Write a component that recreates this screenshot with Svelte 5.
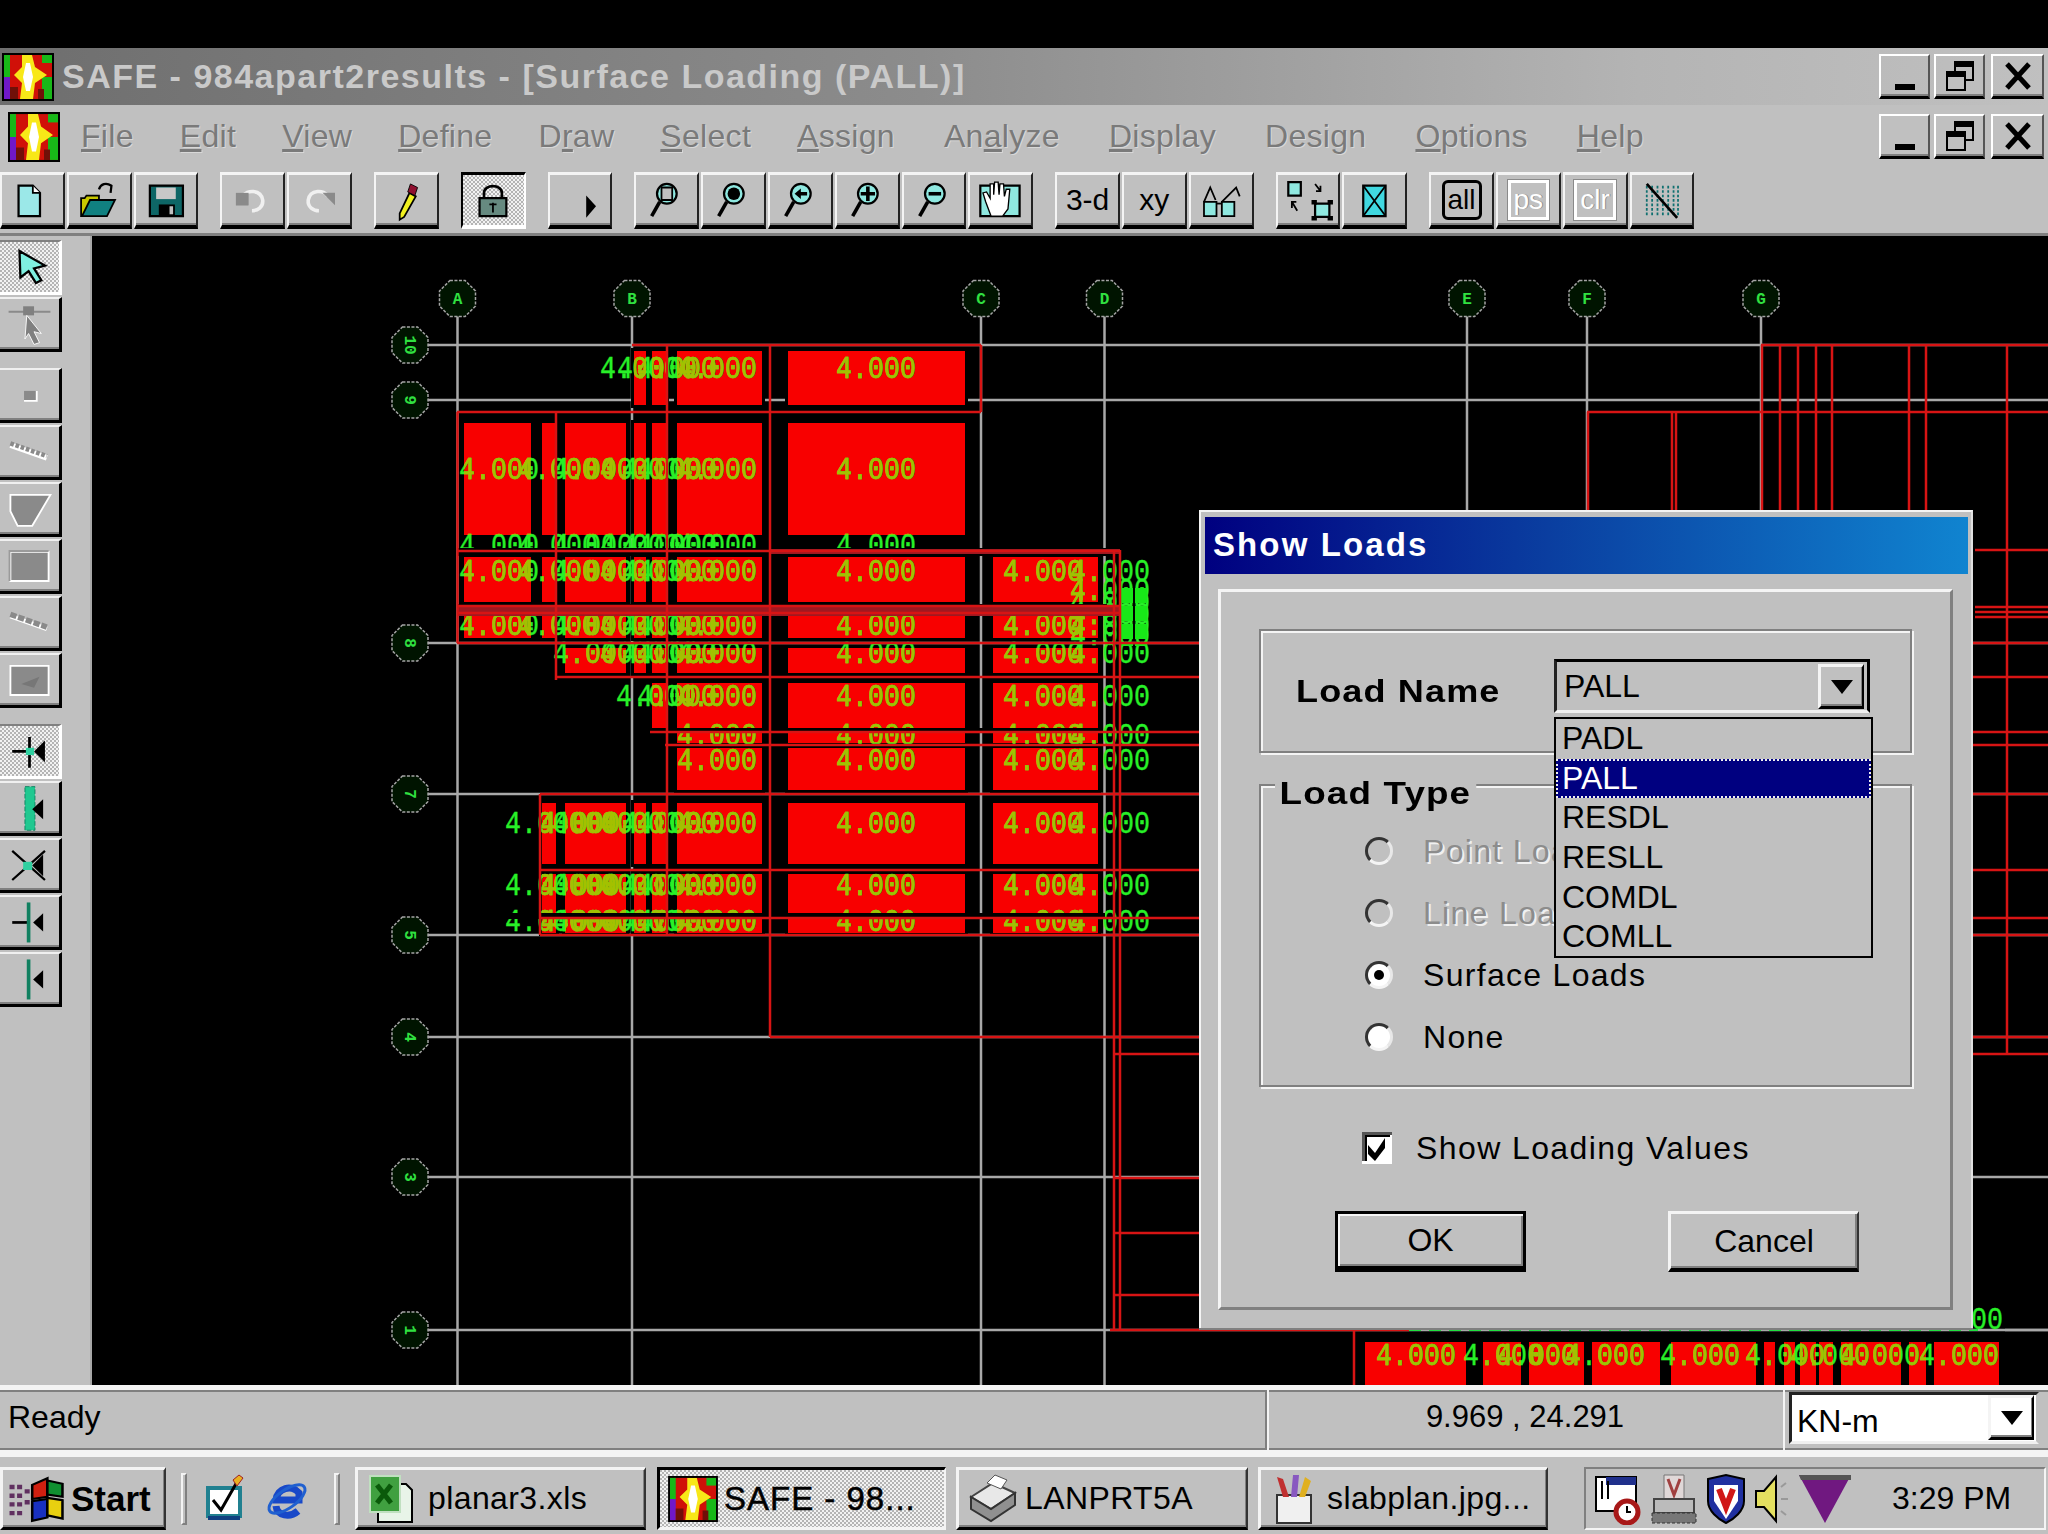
<script>
  // SAFE window with the Show Loads dialog open on top of the plan view.
  const menus = ["File", "Edit", "View", "Define", "Draw", "Select", "Assign", "Analyze", "Display", "Design", "Options", "Help"];
  const accessKey = { Draw: 1, Analyze: 2, Design: 4 };

  const mag = (inner) => `<circle cx="33" cy="21" r="11" fill="#8fe8e0" stroke="#000" stroke-width="2.5"/><path d="M25 30L16 46" stroke="#000" stroke-width="4"/>${inner}`;

  const ICONS = {
    new: `<path d="M17 12h16l8 8v26H17z" fill="#9be8e8" stroke="#000" stroke-width="2.5"/><path d="M33 12v8h8" fill="#fff" stroke="#000" stroke-width="2"/>`,
    open: `<path d="M12 46V26h4l2-3h14v5H24L14 46z" fill="#c8c800" stroke="#000" stroke-width="2"/><path d="M13 46l9-18h28l-9 18z" fill="#108080" stroke="#000" stroke-width="2"/><path d="M32 16c2-6 8-8 14-4l-1 8" fill="none" stroke="#000" stroke-width="2.5"/>`,
    save: `<path d="M14 12h37v34H14z" fill="#0e6666" stroke="#000" stroke-width="2.5"/><path d="M21 14h22v13H21z" fill="#c8c8c8"/><path d="M24 33h18v13H24z" fill="#000"/><path d="M36 35h4v9h-4z" fill="#c0c0c0"/>`,
    undo: `<path d="M22 24c4-8 20-8 22 4 1 8-6 12-12 12" fill="none" stroke="#f0f0f0" stroke-width="4"/><path d="M14 20h14v14H14z" fill="#8a8a8a"/><path d="M14 34l14-14v14z" fill="#8a8a8a"/>`,
    redo: `<path d="M42 24c-4-8-20-8-22 4-1 8 6 12 12 12" fill="none" stroke="#f0f0f0" stroke-width="4"/><path d="M50 20H36l14 14z" fill="#8a8a8a"/>`,
    pencil: `<path d="M36 20l7 4-13 23-5 3 0-7z" fill="#f0f020" stroke="#000" stroke-width="2"/><path d="M37 10l8 4-3 9-8-4z" fill="#901030" stroke="#000" stroke-width="1"/>`,
    lock: `<path d="M22 26v-6c0-10 20-10 20 0v6" fill="none" stroke="#000" stroke-width="3"/><path d="M17 26h30v20H17z" fill="#668a80" stroke="#000" stroke-width="2.5"/><path d="M32 31v11M28 33h8" stroke="#000" stroke-width="2"/>`,
    play: `<path d="M39 23l11 12-11 13z" fill="#000"/>`,
    zrect: mag(`<path d="M27 14h12v14H27z" fill="#c0c0c0" stroke="#000" stroke-width="2"/>`),
    zall: mag(`<circle cx="33" cy="21" r="7" fill="#000"/>`),
    zprev: mag(`<path d="M26 21l7-6v4h7v4h-7v4z" fill="#000"/>`),
    zin: mag(`<path d="M31 13h4v6h6v4h-6v6h-4v-6h-6v-4h6z" fill="#000"/>`),
    zout: mag(`<path d="M26 19h14v4H26z" fill="#000"/>`),
    pan: `<path d="M10 12h44v34H10z" fill="#8fe8e0" stroke="#000" stroke-width="2.5"/><path d="M16 30l-3-10 4-1 4 7V10h4v12l1-14h4l1 14 1-12h4l1 14 2-8h4l-2 22-6 8H22z" fill="#fff" stroke="#000" stroke-width="1.5"/>`,
    glasses: `<path d="M13 30h14v16H13zM33 30h14v16H33z" fill="#8fe8e0" stroke="#000" stroke-width="2"/><path d="M13 30l7-16 6 14M33 30l16-16 4 10" fill="none" stroke="#000" stroke-width="2"/><path d="M27 32h6" stroke="#000" stroke-width="2"/>`,
    fit: `<path d="M10 8h14v15H10z" fill="#8fe8e0" stroke="#000" stroke-width="2.5"/><path d="M40 32h16v15H40z" fill="#8fe8e0" stroke="#000" stroke-width="2.5"/><path d="M36 28h6v5h-6zM54 28h6v5h-6zM36 46h6v5h-6zM54 46h6v5h-6z" fill="#000"/><path d="M40 10l6 8M46 12v6h-5M14 30l6 10M14 37v-7h5" fill="none" stroke="#000" stroke-width="2"/>`,
    xbox: `<path d="M20 12h25v34H20z" fill="#40d8e0" stroke="#000" stroke-width="2.5"/><path d="M20 12l25 34M45 12L20 46" stroke="#000" stroke-width="2"/>`,
    nogrid: `<path d="M15 12v34M21 12v34M27 12v34M33 12v34M39 12v34M45 12v34M50 12v34" stroke="#107070" stroke-width="2" stroke-dasharray="3 2"/><path d="M15 10l34 38" stroke="#000" stroke-width="3"/>`,
    arrow: `<path d="M20 10l28 16-12 3 8 13-6 3-8-13-9 7z" fill="#7ff0e0" stroke="#000" stroke-width="2.5"/>`,
    pick: `<path d="M8 14h46" stroke="#8a8a8a" stroke-width="2"/><path d="M24 8h12v10H24z" fill="#808080"/><path d="M28 18l16 20-8-2 6 12-6 2-6-12-4 6z" fill="#808080" stroke="#fff"/>`,
    dot: `<path d="M25 23h13v10H25z" fill="#8a8a8a"/><path d="M25 33h13v2H25zM38 23h2v12h-2z" fill="#fff"/>`,
    line: `<path d="M10 20l40 14" stroke="#fff" stroke-width="6"/><path d="M10 18l40 14" stroke="#8a8a8a" stroke-width="5" stroke-dasharray="4 2"/>`,
    poly: `<path d="M10 12h44L34 46H18L10 30z" fill="#8a8a8a" stroke="#fff" stroke-width="2"/>`,
    area: `<path d="M10 12h42v32H10z" fill="#8a8a8a" stroke="#fff" stroke-width="2"/><path d="M8 10h44v2H10v32H8z" fill="#9a9a9a"/>`,
    beam: `<path d="M10 20l40 14" stroke="#fff" stroke-width="5"/><path d="M10 18l40 14" stroke="#8a8a8a" stroke-width="6" stroke-dasharray="7 2"/>`,
    slab: `<path d="M10 12h42v32H10z" fill="#8a8a8a" stroke="#fff" stroke-width="2"/><path d="M22 32l20-8-6 12z" fill="#777"/>`,
    snapa: `<path d="M12 28h22M31 12v34" stroke="#000" stroke-width="3"/><path d="M27 24h9v8h-9z" fill="#30d0a0"/><path d="M48 16v24L36 28z" fill="#000"/>`,
    snapb: `<path d="M26 4h11v48H26z" fill="#20c890" stroke="#108060" stroke-dasharray="5 2"/><path d="M46 18v22L34 29z" fill="#000"/>`,
    snapc: `<path d="M12 12l36 32M48 12L12 44" stroke="#000" stroke-width="2.5"/><path d="M24 24h10v9H24z" fill="#30d0a0"/><path d="M46 16v24L34 28z" fill="#000"/>`,
    snapd: `<path d="M12 28h18" stroke="#000" stroke-width="3"/><path d="M30 6v44" stroke="#108060" stroke-width="4"/><path d="M46 18v20L35 28z" fill="#000"/>`,
    snape: `<path d="M30 6v44" stroke="#108060" stroke-width="4"/><path d="M46 18v20L35 28z" fill="#000"/>`
  };

  const toolGroups = [
    [{ i: "new" }, { i: "open" }, { i: "save" }],
    [{ i: "undo" }, { i: "redo" }],
    [{ i: "pencil" }],
    [{ i: "lock", on: true }],
    [{ i: "play" }],
    [{ i: "zrect" }, { i: "zall" }, { i: "zprev" }, { i: "zin" }, { i: "zout" }, { i: "pan" }],
    [{ t: "3-d" }, { t: "xy" }, { i: "glasses" }],
    [{ i: "fit" }, { i: "xbox" }],
    [{ t: "all", framed: true }, { t: "ps", framed: true, off: true }, { t: "clr", framed: true, off: true }, { i: "nogrid" }]
  ];
  const sideGroups = [
    [{ i: "arrow", on: true }, { i: "pick" }],
    [{ i: "dot" }, { i: "line" }, { i: "poly" }, { i: "area" }, { i: "beam" }, { i: "slab" }],
    [{ i: "snapa", on: true }, { i: "snapb" }, { i: "snapc" }, { i: "snapd" }, { i: "snape" }]
  ];

  // plan geometry, in page pixels (the svg viewBox starts at the canvas corner)
  const gridX = [["A", 457.5], ["B", 632], ["C", 981], ["D", 1104.5], ["E", 1467], ["F", 1587], ["G", 1761]];
  const gridY = [["10", 345], ["9", 400], ["8", 643], ["7", 794], ["5", 935], ["4", 1037], ["3", 1177], ["1", 1330]];
  const cols = [[464, 531], [542, 556], [565, 626], [634, 646], [652, 666], [677, 762], [788, 965], [993, 1098]];
  const blockRows = [
    [351, 405, [3, 4, 5, 6]], [423, 535, [0, 1, 2, 3, 4, 5, 6]], [557, 602, [0, 1, 2, 3, 4, 5, 6, 7]],
    [616, 638, [0, 1, 2, 3, 4, 5, 6, 7]], [648, 673, [2, 3, 4, 5, 6, 7]], [683, 728, [4, 5, 6, 7]],
    [733, 743, [5, 6, 7]], [748, 790, [5, 6, 7]], [803, 864, [1, 2, 3, 4, 5, 6, 7]], [874, 933, [1, 2, 3, 4, 5, 6, 7]]
  ];
  const bottomBlocks = [[1365, 1466], [1483, 1521], [1529, 1584], [1592, 1660], [1671, 1756], [1764, 1775], [1784, 1795], [1800, 1816], [1819, 1833], [1841, 1901], [1909, 1926], [1934, 1999]];
  const blocks = [
    ...blockRows.flatMap(([y1, y2, idx]) => idx.map((c) => ({ x: cols[c][0], y: y1, w: cols[c][1] - cols[c][0], h: y2 - y1 }))),
    ...bottomBlocks.map(([a, b]) => ({ x: a, y: 1342, w: b - a, h: 43 }))
  ];

  const redH = [
    [345, 632, 981], [345, 1761, 2048], [412, 457, 981], [412, 1587, 2048], [551, 457, 1120], [550, 1975, 2048],
    [606, 457, 1120], [613, 457, 1120], [607, 1975, 2048], [612, 1975, 2048], [617, 1975, 2048], [643, 457, 2048],
    [677, 556, 2048], [732, 650, 2048], [745, 665, 2048], [794, 540, 2048], [870, 540, 2048], [918, 540, 2048],
    [935, 540, 2048], [1037, 770, 2048], [1054, 1115, 2048], [1178, 1115, 1200], [1233, 1115, 1200], [1295, 1115, 1200], [1330, 1110, 1409]
  ];
  const redV = [
    [770, 345, 1037], [667, 345, 935], [981, 345, 412], [457.5, 412, 643], [556, 412, 680], [540, 794, 935],
    [1114, 550, 1330], [1120, 550, 1330], [1588, 412, 510], [1672, 412, 510], [1676, 412, 510], [1762, 345, 510],
    [1780, 345, 510], [1798, 345, 510], [1816, 345, 510], [1832, 345, 510], [1909, 345, 510], [1926, 345, 510], [2007, 345, 1054], [1354, 1330, 1385]
  ];
  // strips where the drawing order hides part of a row of values
  const covers = [[457, 548, 650, 8], [457, 604, 650, 10], [650, 728, 450, 5], [505, 913, 600, 6]];
  const bands = [[770, 549, 350, 5], [457, 607, 663, 7], [457, 613, 663, 3]];

  const all = [459, 518, 553, 600, 622, 637, 677, 836, 1003, 1070];
  const right = [677, 836, 1003, 1070];
  const valueRows = [
    [378, [600, 617, 637, 677, 836]], [479, all.slice(0, 8)], [555, all.slice(0, 8)], [581, all], [635, all],
    [663, all.slice(2)], [706, [616, 637, ...right]], [745, right], [770, right], [833, [505, 540, ...all.slice(2)]],
    [895, [505, 540, ...all.slice(2)]], [931, [505, 540, ...all.slice(2)]], [600, [1070]], [612, [1070]], [624, [1070]], [645, [1070]],
    [1365, [1376, 1463, 1497, 1565, 1660, 1745, 1790, 1840, 1919]], [1329, [1923]]
  ];

  const octagon = (cx, cy, r) => {
    const a = r * 0.42;
    return [[-a, -r], [a, -r], [r, -a], [r, a], [a, r], [-a, r], [-r, a], [-r, -a]].map(([x, y]) => `${cx + x},${cy + y}`).join(" ");
  };

  const loadItems = ["PADL", "PALL", "RESDL", "RESLL", "COMDL", "COMLL"];
  const safeIcon = `<rect width="52" height="48" fill="#000"/><rect x="2" y="2" width="48" height="44" fill="#d01008"/><rect x="2" y="2" width="6" height="22" fill="#18b818"/><rect x="2" y="24" width="6" height="22" fill="#7018c8"/><rect x="40" y="24" width="10" height="22" fill="#18b818"/><rect x="40" y="2" width="10" height="8" fill="#18b818"/><path d="M8 34h8v12H8zM36 36h6v10h-6z" fill="#701008"/><path d="M20 2h10l3 12 12 8-12 8-2 16H18l2-16-8-8 8-8z" fill="#f8e818"/><path d="M24 10h4l3 14-3 14h-4l-3-14z" fill="#fff"/>`;
</script>

<div class="desktop">
  <div class="top-black"></div>

  <div class="titlebar">
    <svg class="app-icon" width="52" height="48" viewBox="0 0 52 48">{@html safeIcon}</svg>
    <span class="title-text">SAFE - 984apart2results - [Surface Loading (PALL)]</span>
    {@render winButtons()}
  </div>

  <div class="menubar">
    <svg class="menu-icon" width="52" height="50" viewBox="0 0 52 48" preserveAspectRatio="none">{@html safeIcon}</svg>
    <div class="menus">
      {#each menus as m}
        {@const k = accessKey[m] ?? 0}
        <span>{m.slice(0, k)}<u>{m[k]}</u>{m.slice(k + 1)}</span>
      {/each}
    </div>
    {@render winButtons()}
  </div>

  <div class="toolbar">
    {#each toolGroups as group}
      <div class="tool-group">
        {#each group as b}
          <div class="tool" class:pressed={b.on}>
            {#if b.i}
              <svg width="62" height="50" viewBox="0 0 65 56">{@html ICONS[b.i]}</svg>
            {:else}
              <span class="tool-label" class:framed={b.framed} class:off={b.off}>{b.t}</span>
            {/if}
          </div>
        {/each}
      </div>
    {/each}
  </div>

  <div class="main">
    <div class="sidebar">
      {#each sideGroups as group}
        <div class="side-group">
          {#each group as b}
            <div class="side-tool" class:pressed={b.on}>
              <svg width="60" height="50" viewBox="0 0 62 55">{@html ICONS[b.i]}</svg>
            </div>
          {/each}
        </div>
      {/each}
    </div>

    <svg class="plan" width="1956" height="1149" viewBox="92 236 1956 1149">
      <defs>
        <clipPath id="on-red">
          {#each blocks as b}<rect x={b.x} y={b.y} width={b.w} height={b.h} />{/each}
        </clipPath>
      </defs>

      {#each gridX as [label, x], i}
        <line class="grid" x1={x} y1="316" x2={x} y2={i < 4 ? 1385 : 510} />
        <polygon class="bubble" points={octagon(x, 298.5, 18)} />
        <text class="bubble-text" x={x} y="304">{label}</text>
      {/each}
      {#each gridY as [label, y]}
        <line class="grid" x1="428" y1={y} x2="2048" y2={y} />
        <polygon class="bubble" points={octagon(410, y, 18)} />
        <text class="bubble-text" transform="rotate(90 410 {y})" x="410" y={y + 5}>{label}</text>
      {/each}

      {#each blocks as b}<rect class="block" x={b.x} y={b.y} width={b.w} height={b.h} />{/each}
      <line class="grid" x1="2005" y1="1330" x2="2048" y2="1330" />

      {#each valueRows as [y, xs]}
        {#each xs as x}<text class="value" x={x} y={y} textLength="80" lengthAdjust="spacingAndGlyphs">4.000</text>{/each}
      {/each}
      <g clip-path="url(#on-red)">
        {#each valueRows as [y, xs]}
          {#each xs as x}<text class="value olive" x={x} y={y} textLength="80" lengthAdjust="spacingAndGlyphs">4.000</text>{/each}
        {/each}
      </g>
      <line class="stack" x1="1127" y1="588" x2="1127" y2="646" />
      <line class="stack" x1="1141" y1="588" x2="1141" y2="646" />

      {#each covers as [x, y, w, h]}<rect x={x} y={y} width={w} height={h} fill="#000" />{/each}
      {#each bands as [x, y, w, h]}<rect x={x} y={y} width={w} height={h} fill="#a01820" />{/each}
      {#each redH as [y, x1, x2]}<line class="red" x1={x1} y1={y} x2={x2} y2={y} />{/each}
      {#each redV as [x, y1, y2]}<line class="red" x1={x} y1={y1} x2={x} y2={y2} />{/each}
      <line class="dash" x1="1409" y1="1330" x2="1978" y2="1330" />
    </svg>

    <div class="dialog">
      <div class="dialog-title">Show Loads</div>
      <div class="dialog-panel">
        <div class="frame name-frame">
          <span class="bold-label">Load Name</span>
          <div class="combo">
            <span>PALL</span>
            <div class="arrow-btn"><i></i></div>
          </div>
        </div>

        <div class="frame type-frame">
          <span class="legend">Load Type</span>
          <label class="radio disabled"><i></i><span>Point Loads</span></label>
          <label class="radio disabled"><i></i><span>Line Loads</span></label>
          <label class="radio checked"><i></i><span>Surface Loads</span></label>
          <label class="radio"><i></i><span>None</span></label>
        </div>

        <div class="check-row">
          <svg width="30" height="32" viewBox="0 0 30 32">
            <rect width="30" height="32" fill="#fff" />
            <path d="M0 0h30v3H3v26H0z" fill="#555" />
            <path d="M3 3h25v2H5v24H3z" fill="#000" />
            <path d="M6 13l7 8L23 6v10L13 29 6 22z" fill="#000" />
          </svg>
          <span>Show Loading Values</span>
        </div>

        <div class="dialog-buttons">
          <div class="push default">OK</div>
          <div class="push">Cancel</div>
        </div>
      </div>

      <div class="dropdown">
        {#each loadItems as item, i}
          <div class="drop-item" class:selected={i === 1}>{item}</div>
        {/each}
      </div>
    </div>
  </div>

  <div class="statusbar">
    <div class="st-ready">Ready</div>
    <div class="st-coords">9.969 , 24.291</div>
    <div class="units">
      <span>KN-m</span>
      <div class="arrow-btn"><i></i></div>
    </div>
  </div>

  <div class="taskbar">
    <div class="task start">
      <svg width="58" height="50" viewBox="0 0 46 46" preserveAspectRatio="none">
        <path d="M2 10h4v4H2zM8 10h4v4H8zM2 18h4v4H2zM8 18h4v4H8zM2 26h4v4H2zM8 26h4v4H8zM2 34h4v4H2zM8 34h4v4H8zM14 14h4v4h-4zM14 24h4v4h-4z" fill="#603060" />
        <path d="M20 10l12-6v17l-12 2z" fill="#d02010" stroke="#000" stroke-width="2" />
        <path d="M32 6l12 3v12l-12-2z" fill="#109030" stroke="#000" stroke-width="2" />
        <path d="M20 25l12-2v17l-12 3z" fill="#1830c0" stroke="#000" stroke-width="2" />
        <path d="M32 22l12 2v17l-12-3z" fill="#e8d010" stroke="#000" stroke-width="2" />
      </svg>
      <b>Start</b>
    </div>
    <div class="grip"></div>
    <div class="quick">
      <svg width="44" height="50" viewBox="0 0 44 50">
        <path d="M3 14h32v28H3z" fill="#fff" stroke="#208090" stroke-width="4" />
        <path d="M8 26l8 10 16-28" fill="none" stroke="#000" stroke-width="3" />
        <path d="M28 6l6-5 4 3-6 8z" fill="#e8b020" stroke="#a02020" />
        <path d="M3 42h32v4H3z" fill="#104080" />
      </svg>
      <svg width="44" height="50" viewBox="0 0 44 50">
        <path d="M34 26H11c1-12 16-16 23-7zM11 32c1 10 14 12 22 5" fill="none" stroke="#1848c8" stroke-width="7" />
        <ellipse cx="22" cy="25" rx="21" ry="9" fill="none" stroke="#2060d0" stroke-width="3" transform="rotate(-35 22 25)" />
      </svg>
    </div>
    <div class="grip"></div>
    <div class="task w-excel">
      <svg width="56" height="50" viewBox="0 0 56 50">
        <path d="M12 10h28l6 6v32H12z" fill="#e8f4e8" stroke="#000" stroke-width="2" />
        <path d="M4 2h30v36H4z" fill="#40a040" stroke="#c0e0c0" stroke-width="2" />
        <path d="M11 11l14 18M25 11L11 29" stroke="#0a5a0a" stroke-width="5" />
      </svg>
      <span>planar3.xls</span>
    </div>
    <div class="task w-safe pressed">
      <svg width="50" height="46" viewBox="0 0 52 48">{@html safeIcon}</svg>
      <span class="task-bold">SAFE - 98...</span>
    </div>
    <div class="task w-lan">
      <svg width="52" height="52" viewBox="0 0 52 52">
        <path d="M4 24l22-14 22 10-24 16z" fill="#e8e8e8" stroke="#444" stroke-width="2" />
        <path d="M4 24v12l20 12 24-16V20L24 36z" fill="#909090" stroke="#333" stroke-width="2" />
        <path d="M20 10l8-8 12 5-6 9z" fill="#fff" stroke="#555" />
      </svg>
      <span>LANPRT5A</span>
    </div>
    <div class="task w-slab">
      <svg width="52" height="52" viewBox="0 0 52 52">
        <path d="M8 22h34v28H8z" fill="#f0f0f0" stroke="#333" stroke-width="2" />
        <path d="M14 24L8 4l6 2 6 18z" fill="#c03030" />
        <path d="M22 24L24 2h6l-2 22z" fill="#8858c0" />
        <path d="M30 24l6-20 6 4-6 16z" fill="#e0b020" />
      </svg>
      <span>slabplan.jpg...</span>
    </div>
    <div class="tray">
      <svg width="48" height="52" viewBox="0 0 48 52">
        <path d="M2 4h40v34H2z" fill="#fff" stroke="#000" stroke-width="2" />
        <path d="M12 4h30v8H12z" fill="#20308c" />
        <path d="M8 8v18M14 8v18" stroke="#000" stroke-width="2" />
        <circle cx="33" cy="39" r="11" fill="#fff" stroke="#a81818" stroke-width="5" />
        <path d="M33 33v6h4" stroke="#000" stroke-width="2" fill="none" />
      </svg>
      <svg width="48" height="52" viewBox="0 0 48 52">
        <path d="M14 2h20v24H14z" fill="#e0d8d8" stroke="#777" />
        <path d="M18 6l6 16 6-16" fill="none" stroke="#a04040" stroke-width="3" />
        <path d="M4 26h40v14H4z" fill="#bbb" stroke="#444" stroke-width="2" />
        <path d="M2 40h44v10H2z" fill="#777" stroke="#333" stroke-dasharray="3 2" />
      </svg>
      <svg width="40" height="52" viewBox="0 0 40 52">
        <path d="M2 6l18-4 18 4v22c0 10-10 18-18 22C12 46 2 38 2 28z" fill="#2030a0" stroke="#000" stroke-width="2" />
        <path d="M8 12h24v16L20 46 8 28z" fill="#fff" />
        <path d="M13 16l7 18 7-18" fill="none" stroke="#d01818" stroke-width="6" />
      </svg>
      <svg width="36" height="52" viewBox="0 0 36 52">
        <path d="M2 18h8L22 4v44L10 34H2z" fill="#e4e060" stroke="#000" stroke-width="2" />
        <path d="M27 14l5-4M27 26h7M27 38l5 4" stroke="#999" stroke-width="2" />
      </svg>
      <svg width="54" height="52" viewBox="0 0 54 52">
        <path d="M1 2h52L27 50z" fill="#701880" />
        <path d="M1 2h52v5H3z" fill="#555" />
      </svg>
      <span class="clock">3:29 PM</span>
    </div>
  </div>
</div>

{#snippet winButtons()}
  <div class="win-buttons">
    <div class="win-btn"><i class="min"></i></div>
    <div class="win-btn">
      <svg width="34" height="34" viewBox="0 0 34 34">
        <path d="M12 3h18v18H12z" fill="none" stroke="#000" stroke-width="2" />
        <path d="M12 4h18v4H12z" fill="#000" />
        <path d="M4 13h18v18H4z" fill="#c0c0c0" stroke="#000" stroke-width="2" />
        <path d="M4 14h18v4H4z" fill="#000" />
      </svg>
    </div>
    <div class="win-btn close">
      <svg width="26" height="28" viewBox="0 0 26 28"><path d="M2 2l22 24M24 2L2 26" stroke="#000" stroke-width="5" /></svg>
    </div>
  </div>
{/snippet}

<style>
  :global(body) {
    margin: 0;
    background: #000;
  }
  .desktop {
    width: 2048px;
    height: 1534px;
    display: flex;
    flex-direction: column;
    overflow: hidden;
    background: #c0c0c0;
    font-family: "Liberation Sans", Arial, sans-serif;
    color: #000;
  }
  .top-black {
    height: 48px;
    background: #000;
  }

  .titlebar {
    height: 57px;
    display: flex;
    align-items: center;
    background: linear-gradient(90deg, #6e6e6e 0%, #8c8c8c 45%, #b4b4b4 80%, #c0c0c0 100%);
  }
  .app-icon {
    margin-left: 2px;
  }
  .title-text {
    margin-left: 8px;
    font-size: 34px;
    font-weight: 700;
    letter-spacing: 1.5px;
    color: #c9c9c9;
    white-space: nowrap;
  }
  .win-buttons {
    margin-left: auto;
    margin-right: 4px;
    display: flex;
    gap: 4px;
  }
  .win-btn {
    width: 51px;
    height: 45px;
    box-sizing: border-box;
    display: flex;
    align-items: center;
    justify-content: center;
    border-top: 2px solid #fff;
    border-left: 2px solid #fff;
    border-right: 2px solid #555;
    border-bottom: 3px solid #000;
    box-shadow: inset 0 -2px #808080;
  }
  .win-btn.close {
    margin-left: 2px;
    width: 53px;
  }
  .min {
    width: 20px;
    height: 6px;
    background: #000;
    margin-top: 22px;
  }

  .menubar {
    height: 63px;
    display: flex;
    align-items: center;
    background: #c0c0c0;
  }
  .menu-icon {
    margin-left: 8px;
  }
  .menus {
    margin-left: 21px;
    display: flex;
    gap: 46px;
    font-size: 32px;
    letter-spacing: 0.3px;
    color: #7a7a7a;
    text-shadow: 1px 1px 0 #d8d8d8;
  }
  .menus span:nth-child(n + 8) {
    margin-left: 3px;
  }

  .toolbar {
    height: 68px;
    box-sizing: border-box;
    padding-top: 4px;
    display: flex;
    gap: 22px;
    border-bottom: 3px solid #808080;
  }
  .tool-group {
    display: flex;
    gap: 2px;
    height: 57px;
  }
  .tool {
    width: 64.8px;
    box-sizing: border-box;
    display: flex;
    align-items: center;
    justify-content: center;
    border-top: 3px solid #f4f4f4;
    border-left: 2px solid #f4f4f4;
    border-right: 2px solid #222;
    border-bottom: 4px solid #000;
    box-shadow: inset 0 -2px #808080;
  }
  .tool.pressed {
    border-top: 3px solid #000;
    border-left: 2px solid #000;
    border-right: 2px solid #fff;
    border-bottom: 4px solid #fff;
    box-shadow: none;
    background: repeating-conic-gradient(#f2f2f2 0 25%, #b4b4b4 0 50%) 0 0 / 4px 4px;
  }
  .side-tool.pressed {
    border-top: 2px solid #808080;
    border-right: 3px solid #fff;
    border-bottom: 3px solid #fff;
    box-shadow: none;
    background: repeating-conic-gradient(#f2f2f2 0 25%, #b4b4b4 0 50%) 0 0 / 4px 4px;
  }
  .tool-label {
    font-size: 30px;
    line-height: 34px;
  }
  .tool-label.framed {
    border: 3px solid #000;
    border-radius: 6px;
    padding: 0 3px;
    font-size: 28px;
  }
  .tool-label.off {
    color: #fff;
    border-color: #fff;
    border-radius: 0;
    text-shadow: 1px 0 #8a8a8a;
    outline: 1px solid #8a8a8a;
  }

  .main {
    position: relative;
    height: 1149px;
    display: flex;
    background: #000;
  }
  .sidebar {
    width: 92px;
    flex: none;
    box-sizing: border-box;
    padding-top: 4px;
    background: #c0c0c0;
    border-right: 2px solid #a8a8a8;
    display: flex;
    flex-direction: column;
    gap: 16px;
  }
  .side-group {
    display: flex;
    flex-direction: column;
    gap: 2px;
    width: 62px;
  }
  .side-tool {
    height: 55px;
    box-sizing: border-box;
    display: flex;
    align-items: center;
    justify-content: center;
    border-top: 2px solid #f0f0f0;
    border-right: 3px solid #000;
    border-bottom: 3px solid #000;
    box-shadow: inset 0 -2px #808080;
  }
  .plan {
    display: block;
    background: #000;
  }
  .grid {
    stroke: #a8a8a8;
    stroke-width: 2.5;
  }
  .bubble {
    fill: #001400;
    stroke: #a4a4a4;
    stroke-width: 1.5;
    stroke-dasharray: 3 1.5;
  }
  .bubble-text {
    fill: #30e040;
    font-family: "Liberation Mono", monospace;
    font-size: 16px;
    font-weight: 700;
    text-anchor: middle;
  }
  .block {
    fill: #f80000;
    stroke: #000;
    stroke-width: 6;
    paint-order: stroke;
  }
  .red {
    stroke: #d81414;
    stroke-width: 2.5;
  }
  .dash {
    stroke: #20e040;
    stroke-width: 2;
    stroke-dasharray: 12 8;
  }
  .stack {
    stroke: #18e818;
    stroke-width: 12;
    stroke-dasharray: 15 3;
  }
  .value {
    fill: #28f028;
    font-family: "Liberation Mono", monospace;
    font-size: 32px;
    stroke: #28f028;
    stroke-width: 0.4;
  }
  .value.olive {
    fill: #a4c000;
    stroke: #a4c000;
  }

  .dialog {
    position: absolute;
    left: 1199px;
    top: 274px;
    width: 774px;
    height: 818px;
    box-sizing: border-box;
    padding: 5px 3px 0 4px;
    background: #c0c0c0;
    border-top: 2px solid #f4f4f4;
    border-left: 2px solid #f4f4f4;
    border-right: 2px solid #e0e0e0;
    box-shadow: 0 2px 0 #808080;
  }
  .dialog-title {
    height: 57px;
    box-sizing: border-box;
    padding: 9px 0 0 8px;
    font-size: 33px;
    font-weight: 700;
    letter-spacing: 2.1px;
    color: #fff;
    background: linear-gradient(90deg, #000080 0%, #0a3ea0 45%, #1084d0 100%);
  }
  .dialog-panel {
    margin: 15px 15px 0 13px;
    height: 721px;
    box-sizing: border-box;
    padding: 37px 38px 0;
    border-top: 3px solid #f4f4f4;
    border-left: 3px solid #f4f4f4;
    border-right: 3px solid #808080;
    border-bottom: 3px solid #808080;
    display: flex;
    flex-direction: column;
  }
  .frame {
    position: relative;
    box-sizing: border-box;
    border: 2px solid #808080;
    box-shadow: inset 2px 2px 0 #f4f4f4, 2px 2px 0 #f4f4f4;
  }
  .name-frame {
    height: 124px;
    padding: 28px 0 0 35px;
    display: flex;
    align-items: flex-start;
  }
  .bold-label {
    width: 258px;
    flex: none;
    margin-top: 14px;
    font-size: 32px;
    font-weight: 700;
    letter-spacing: 1px;
    white-space: nowrap;
    transform: scaleX(1.127);
    transform-origin: left center;
  }
  .combo {
    width: 316px;
    height: 54px;
    flex: none;
    box-sizing: border-box;
    padding: 2px 3px 0 7px;
    display: flex;
    justify-content: space-between;
    font-size: 32px;
    line-height: 44px;
    background: #c0c0c0;
    border-top: 3px solid #000;
    border-left: 3px solid #222;
    border-right: 3px solid #000;
    border-bottom: 3px solid #f0f0f0;
  }
  .arrow-btn {
    width: 46px;
    height: 45px;
    box-sizing: border-box;
    display: flex;
    align-items: center;
    justify-content: center;
    border-top: 3px solid #f4f4f4;
    border-left: 3px solid #f4f4f4;
    border-right: 2px solid #000;
    border-bottom: 3px solid #000;
    box-shadow: inset -1px -2px #808080;
  }
  .arrow-btn i {
    width: 0;
    height: 0;
    border-left: 11px solid transparent;
    border-right: 11px solid transparent;
    border-top: 14px solid #000;
  }
  .type-frame {
    margin-top: 31px;
    height: 303px;
    padding: 47px 0 0 104px;
    display: flex;
    flex-direction: column;
    gap: 26px;
  }
  .legend {
    position: absolute;
    left: 14px;
    top: -11px;
    padding: 0 4px;
    background: #c0c0c0;
    font-size: 32px;
    line-height: 36px;
    font-weight: 700;
    letter-spacing: 1px;
    transform: scaleX(1.15);
    transform-origin: left center;
  }
  .radio {
    height: 36px;
    display: flex;
    align-items: center;
    gap: 30px;
    font-size: 32px;
    letter-spacing: 1.3px;
  }
  .radio i {
    position: relative;
    width: 28px;
    height: 28px;
    box-sizing: border-box;
    border-radius: 50%;
    background: #fff;
    border: 3px solid;
    border-color: #333 #e8e8e8 #f4f4f4 #333;
  }
  .radio.disabled {
    color: #8c8c8c;
    text-shadow: 2px 2px 0 #f0f0f0;
  }
  .radio.disabled i {
    background: #c0c0c0;
  }
  .radio.checked i::after {
    content: "";
    position: absolute;
    left: 6px;
    top: 6px;
    width: 10px;
    height: 10px;
    border-radius: 50%;
    background: #000;
  }
  .check-row {
    margin: 45px 0 0 103px;
    height: 32px;
    display: flex;
    align-items: center;
    gap: 24px;
    font-size: 32px;
    letter-spacing: 1.4px;
  }
  .dialog-buttons {
    margin: 47px 0 0 76px;
    display: flex;
    gap: 142px;
  }
  .push {
    width: 191px;
    height: 61px;
    box-sizing: border-box;
    display: flex;
    align-items: center;
    justify-content: center;
    font-size: 32px;
    border-top: 3px solid #f4f4f4;
    border-left: 3px solid #f4f4f4;
    border-right: 2px solid #333;
    border-bottom: 4px solid #000;
    box-shadow: inset -2px -2px #808080;
  }
  .push.default {
    border: 3px solid #000;
    border-bottom-width: 6px;
    box-shadow: inset 2px 2px #f4f4f4, inset -2px -2px #808080;
  }
  .dropdown {
    position: absolute;
    left: 353px;
    top: 205px;
    width: 319px;
    height: 241px;
    box-sizing: border-box;
    border: 2px solid #000;
    background: #c0c0c0;
  }
  .drop-item {
    height: 39.7px;
    box-sizing: border-box;
    padding-left: 6px;
    font-size: 32px;
    line-height: 39px;
  }
  .drop-item.selected {
    background: #000080;
    color: #fff;
    outline: 2px dotted #f0f0f0;
    outline-offset: -2px;
  }

  .statusbar {
    height: 70px;
    box-sizing: border-box;
    border-top: 5px solid #f4f4f4;
    border-bottom: 5px solid #f4f4f4;
    display: flex;
    position: relative;
    box-shadow: inset 0 2px #808080, inset 0 -2px #808080;
  }
  .st-ready {
    width: 1267px;
    box-sizing: border-box;
    padding: 9px 0 0 8px;
    font-size: 32px;
    border-right: 2px solid #808080;
    box-shadow: 2px 0 #f4f4f4;
  }
  .st-coords {
    width: 518px;
    padding-top: 9px;
    text-align: center;
    font-size: 31px;
    box-sizing: border-box;
    border-right: 2px solid #f4f4f4;
  }
  .units {
    width: 250px;
    height: 52px;
    margin: 2px 0 0 4px;
    box-sizing: border-box;
    padding: 0 2px 0 5px;
    display: flex;
    justify-content: space-between;
    background: #fff;
    border: 3px solid #222;
    border-right-color: #c0c0c0;
    border-bottom-color: #f0f0f0;
    font-size: 32px;
    line-height: 52px;
  }

  .taskbar {
    height: 79px;
    box-sizing: border-box;
    padding: 10px 2px 4px 0;
    display: flex;
    align-items: stretch;
    border-top: 2px solid #f4f4f4;
  }
  .task {
    box-sizing: border-box;
    display: flex;
    align-items: center;
    gap: 6px;
    padding-left: 8px;
    font-size: 32px;
    letter-spacing: 0.4px;
    border-top: 3px solid #f4f4f4;
    border-left: 3px solid #f4f4f4;
    border-right: 2px solid #333;
    border-bottom: 3px solid #000;
    box-shadow: inset -1px -2px #808080;
    white-space: nowrap;
  }
  .task.pressed {
    border-top: 3px solid #000;
    border-left: 3px solid #000;
    border-right: 2px solid #f4f4f4;
    border-bottom: 3px solid #f4f4f4;
    box-shadow: none;
    background: repeating-conic-gradient(#f2f2f2 0 25%, #b4b4b4 0 50%) 0 0 / 4px 4px;
  }
  .start {
    width: 166px;
    gap: 6px;
    padding-left: 4px;
  }
  .start b {
    font-size: 35px;
    letter-spacing: 0;
  }
  .task-bold {
    font-size: 33px;
    letter-spacing: 1px;
    -webkit-text-stroke: 0.5px #000;
  }
  .grip {
    width: 6px;
    margin: 6px 0 0 15px;
    height: 52px;
    box-sizing: border-box;
    border: 2px solid;
    border-color: #f4f4f4 #808080 #808080 #f4f4f4;
  }
  .quick {
    width: 142px;
    box-sizing: border-box;
    padding-left: 18px;
    display: flex;
    align-items: center;
    gap: 16px;
  }
  .quick + .grip {
    margin-left: 5px;
  }
  .w-excel {
    margin-left: 15px;
    width: 291px;
  }
  .w-safe {
    margin-left: 11px;
    width: 289px;
  }
  .w-lan {
    margin-left: 10px;
    width: 292px;
  }
  .w-slab {
    margin-left: 10px;
    width: 290px;
  }
  .tray {
    margin-left: 36px;
    flex: 1;
    box-sizing: border-box;
    display: flex;
    align-items: center;
    padding-left: 8px;
    gap: 8px;
    border: 2px solid;
    border-color: #808080 #f4f4f4 #f4f4f4 #808080;
  }
  .clock {
    margin-left: 32px;
    font-size: 32px;
    white-space: nowrap;
  }
</style>
